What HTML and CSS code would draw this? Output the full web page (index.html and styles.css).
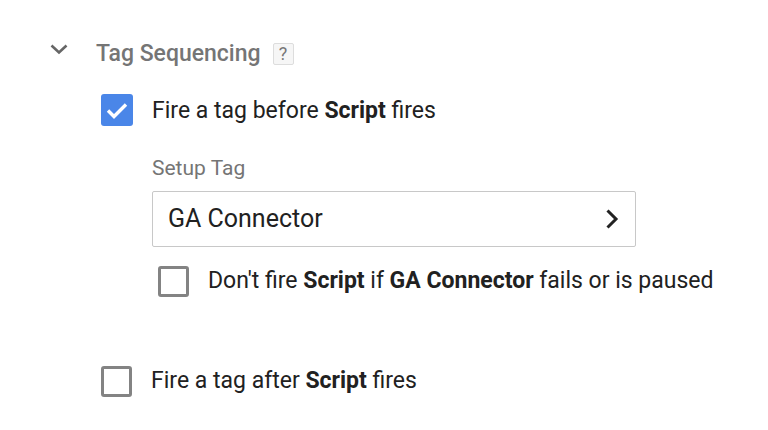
FILE: index.html
```html
<!DOCTYPE html>
<html>
<head>
<meta charset="utf-8">
<link rel="stylesheet" href="styles.css">
</head>
<body>
<div class="section">
  <div class="header">
    <svg class="chev-down" width="24" height="24" viewBox="0 0 24 24"><path d="M4.5 8.5 L12 15.5 L19.5 8.5" fill="none" stroke="#666" stroke-width="2.6"/></svg>
    <span class="title">Tag Sequencing</span>
    <span class="help">?</span>
  </div>
  <div class="body">
    <label class="row first">
      <span class="cb checked"><svg width="32" height="32" viewBox="0 0 32 32"><path d="M7 16.5 L13 22.5 L25 10.5" fill="none" stroke="#fff" stroke-width="3.4"/></svg></span>
      <span class="label">Fire a tag before <b>Script</b> fires</span>
    </label>
    <div class="setup">
      <div class="setup-label">Setup Tag</div>
      <div class="select">
        <span class="select-text">GA Connector</span>
        <svg class="chev-right" width="18" height="24" viewBox="0 0 18 24"><path d="M4.5 3.5 L13 12 L4.5 20.5" fill="none" stroke="#222" stroke-width="3"/></svg>
      </div>
      <label class="row sub">
        <span class="cb"></span>
        <span class="label">Don't fire <b>Script</b> if <b>GA Connector</b> fails or is paused</span>
      </label>
    </div>
    <label class="row after">
      <span class="cb"></span>
      <span class="label">Fire a tag after <b>Script</b> fires</span>
    </label>
  </div>
</div>
</body>
</html>
```
FILE: styles.css
```css
html, body {
  margin: 0;
  padding: 0;
  background: #fff;
}
body {
  font-family: Roboto, "Noto Sans", sans-serif;
  color: #212121;
  width: 768px;
  height: 430px;
  overflow: hidden;
}
.section {
  padding: 36px 0 0 47px;
}
.header {
  display: flex;
  align-items: center;
  height: 36px;
}
.chev-down {
  display: block;
  margin-top: -10px;
}
.title {
  margin-left: 25px;
  font-size: 23px;
  line-height: 36px;
  font-weight: 500;
  color: #757575;
}
.help {
  margin-left: 12px;
  width: 21px;
  height: 22px;
  box-sizing: border-box;
  border: 1px solid #ddd;
  border-radius: 2px;
  background: #f6f6f6;
  color: #777;
  font-size: 18px;
  display: flex;
  align-items: center;
  justify-content: center;
  margin-top: -1px;
}
.body {
  padding-left: 54px;
  padding-top: 22px;
}
.row {
  display: flex;
  align-items: center;
}
.cb {
  width: 31px;
  height: 31px;
  box-sizing: border-box;
  border: 3px solid #838383;
  border-radius: 3px;
  flex: none;
  display: flex;
  align-items: center;
  justify-content: center;
}
.cb.checked {
  width: 32px;
  height: 32px;
  border: none;
  background: #4a86e8;
}
.cb svg { display: block; }
.label {
  margin-left: 19px;
  font-size: 23px;
  line-height: 32px;
  color: #212121;
}
.first .label {
  line-height: 30px;
  padding-top: 2px;
}
.label b { font-weight: 700; }
.setup {
  padding-left: 51px;
  padding-top: 31px;
}
.setup-label {
  font-size: 21px;
  color: #757575;
  line-height: 22px;
}
.select {
  margin-top: 12px;
  width: 484px;
  height: 56px;
  box-sizing: border-box;
  border: 1px solid #c8c8c8;
  border-radius: 2px;
  display: flex;
  align-items: center;
  justify-content: space-between;
  padding: 0 14px 0 15px;
}
.select-text {
  font-size: 25px;
  line-height: 30px;
  color: #212121;
}
.chev-right { display: block; }
.row.sub {
  margin-top: 18px;
  padding-left: 6px;
}
.row.after {
  margin-top: 68px;
}
```
